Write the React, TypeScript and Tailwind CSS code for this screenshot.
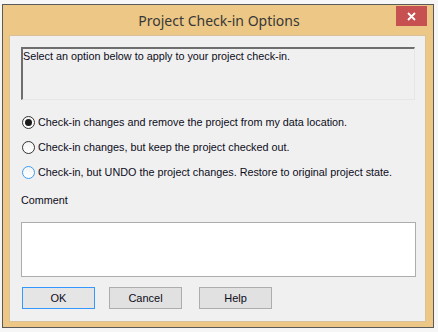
import React, { useState } from 'react';

const options = [
  'Check-in changes and remove the project from my data location.',
  'Check-in changes, but keep the project checked out.',
  'Check-in, but UNDO the project changes. Restore to original project state.',
];

const Radio = ({ checked, focus }: { checked: boolean; focus?: boolean }) => (
  <span
    className={
      'flex h-[13px] w-[13px] shrink-0 items-center justify-center rounded-full border bg-gradient-to-b from-[#f4f4f4] to-white ' +
      (focus ? 'border-[#3c9cf0]' : 'border-[#333333]')
    }
  >
    {checked && <span className="h-[7px] w-[7px] rounded-full bg-[#1a1a1a]" />}
  </span>
);

export default function App() {
  const [selected, setSelected] = useState(0);

  return (
    <div className="h-[332px] w-[438px] overflow-hidden bg-[#f6f6f6] pl-[2px] pt-[4px]">
      <div className="flex h-[324px] w-[432px] flex-col border border-[#5a5a5a] bg-[#ecc785] pl-[6px] pr-[7px] pb-[5px]">
        {/* title bar */}
        <div className="relative flex h-[30px] shrink-0 items-center justify-center">
          <span className="pl-[3px] pt-[1px] text-[14px] text-[#383838] [font-family:'Noto_Sans',sans-serif] leading-none">
            Project Check-in Options
          </span>
          <button className="absolute right-[-1px] top-[1px] flex h-[20px] w-[31px] items-center justify-center bg-[#c75050]">
            <svg width="9" height="9" viewBox="0 0 9 9">
              <path d="M1 1 L8 8 M8 1 L1 8" stroke="white" strokeWidth="1.8" />
            </svg>
          </button>
        </div>

        {/* client */}
        <div className="flex flex-1 flex-col border border-[#d9c29a] bg-[#f0f0f0] px-[11px] pt-[11px] text-[10.8px] text-[#0c0c20] [font-family:'Liberation_Sans',Arial,sans-serif]">
          <div className="h-[53px] w-[394px] border-l-2 border-t-2 border-b border-r border-l-[#6e6e6e] border-t-[#6e6e6e] border-b-[#e6e6e6] border-r-[#e6e6e6] pt-[1px] leading-[13px]">
            Select an option below to apply to your project check-in.
          </div>

          <div className="mt-[16px] flex flex-col gap-[12px] pl-[1px]">
            {options.map((o, i) => (
              <label key={i} className="flex h-[13px] items-center gap-[3px]" onClick={() => setSelected(i)}>
                <Radio checked={selected === i} focus={i === 2} />
                <span className="leading-none">{o}</span>
              </label>
            ))}
          </div>

          <div className="mt-[15px] leading-[13px]">Comment</div>

          <div className="mt-[15px] h-[55px] w-[395px] border border-[#adadad] bg-white" />

          <div className="mt-[10px] flex gap-[14px] pl-[1px]">
            <button className="h-[22px] w-[73px] border border-[#3399ff] bg-[#e5e5e5] text-[11px]">OK</button>
            <button className="h-[22px] w-[73px] border border-[#adadad] bg-[#e1e1e1] text-[11px]">Cancel</button>
            <button className="ml-[3px] h-[22px] w-[73px] border border-[#adadad] bg-[#e1e1e1] text-[11px]">Help</button>
          </div>
        </div>
      </div>
    </div>
  );
}
